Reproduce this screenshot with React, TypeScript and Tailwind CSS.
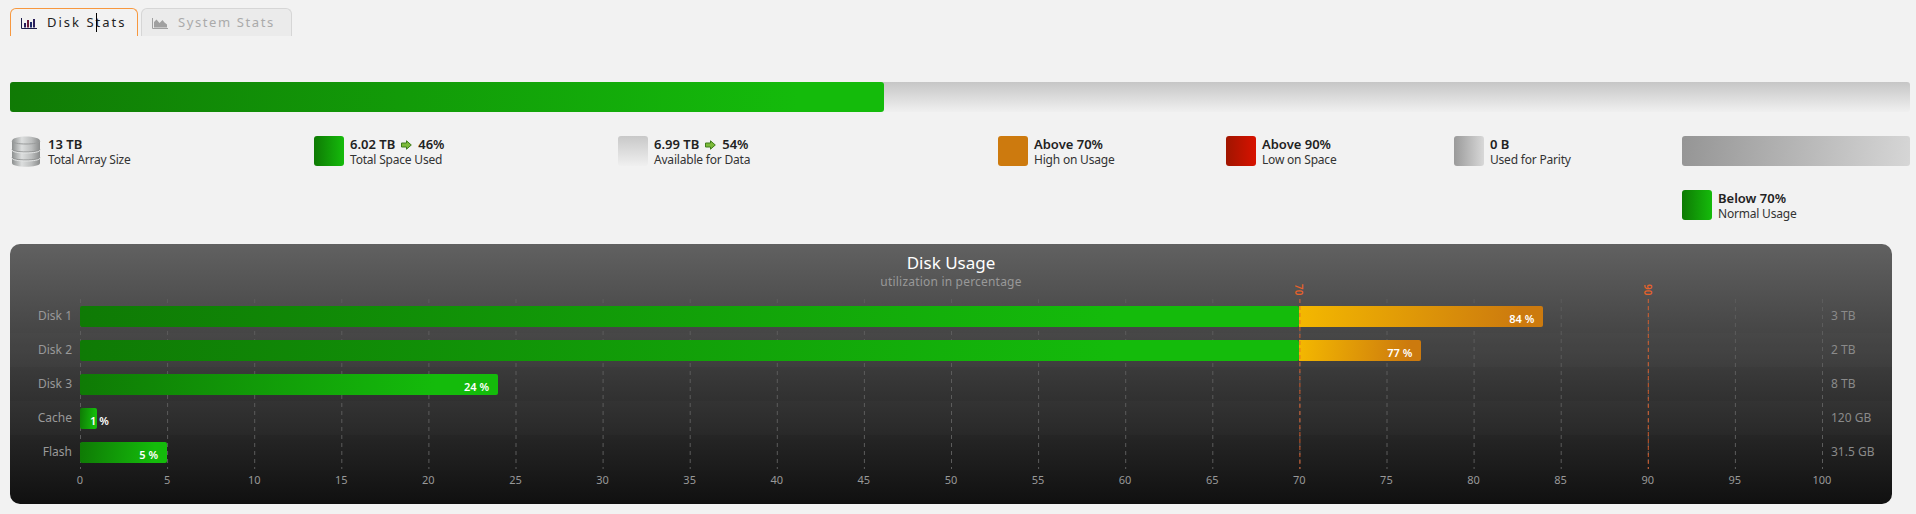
const font = "font-['Noto_Sans',sans-serif]";

const disks = [
  { name: 'Disk 1', used: 84, size: '3 TB' },
  { name: 'Disk 2', used: 77, size: '2 TB' },
  { name: 'Disk 3', used: 24, size: '8 TB' },
  { name: 'Cache', used: 1, size: '120 GB' },
  { name: 'Flash', used: 5, size: '31.5 GB' },
];

const ticks = Array.from({ length: 21 }, (_, i) => i * 5);
const UNIT = 17.42;

function BarIcon() {
  return (
    <svg width="16" height="11" viewBox="0 0 16 11" className="shrink-0">
      <path d="M.5 0v10.5H16" fill="none" stroke="#1d1d4a" />
      <rect x="3" y="5" width="2" height="4.5" fill="#2a1d5a" />
      <rect x="6" y="2" width="2" height="7.5" fill="#6a1a3a" />
      <rect x="9" y="4" width="2" height="5.5" fill="#1d2a6a" />
      <rect x="12" y="1" width="2" height="8.5" fill="#2a1d5a" />
    </svg>
  );
}

function AreaIcon() {
  return (
    <svg width="16" height="11" viewBox="0 0 16 11" className="shrink-0">
      <path d="M.5 0v10.5H16" fill="none" stroke="#a0a0a0" />
      <path d="M2 9.5V4l2.5-2.5L7.5 5l3-3 2 2.5 2.5 2v3z" fill="#a0a0a0" />
    </svg>
  );
}

function DatabaseIcon() {
  return (
    <svg width="30" height="32" viewBox="0 0 30 32" className="shrink-0">
      <defs>
        <linearGradient id="cyl" x1="0" y1="0" x2="1" y2="0">
          <stop offset="0" stopColor="#8d9090" />
          <stop offset="0.35" stopColor="#dcdede" />
          <stop offset="0.7" stopColor="#bcbebe" />
          <stop offset="1" stopColor="#8a8c8c" />
        </linearGradient>
      </defs>
      <path d="M1 5C1-1 29-1 29 5v22c0 5-28 5-28 0z" fill="url(#cyl)" />
      <path d="M1 5c0 4 28 4 28 0" fill="none" stroke="#9a9c9c" />
      <path d="M1 13c0 4 28 4 28 0M1 21c0 4 28 4 28 0" fill="none" stroke="#8f9191" />
      <path d="M1 14c0 4 28 4 28 0M1 22c0 4 28 4 28 0" fill="none" stroke="#e4e6e6" />
    </svg>
  );
}

function Arrow() {
  return (
    <svg width="11" height="10" viewBox="0 0 11 10" className="mx-[6px] inline-block shrink-0">
      <path d="M.5 3h5V.8L10.3 5 5.5 9.2V7h-5z" fill="#7dbb3a" stroke="#3f7d1c" />
    </svg>
  );
}

function Swatch({ className }: { className: string }) {
  return <div className={`h-[30px] w-[30px] shrink-0 rounded-[3px] ${className}`} />;
}

function LegendItem({ icon, title, sub, arrow, width }: { icon: React.ReactNode; title: string; sub: string; arrow?: string; width: string }) {
  return (
    <div className={`flex h-[30px] gap-[6px] ${width}`}>
      {icon}
      <div className="pt-[1px] whitespace-nowrap">
        <div className="flex h-[15px] items-center text-[13px] font-semibold text-[#222]">
          {title}
          {arrow && <Arrow />}
          {arrow}
        </div>
        <div className="text-[12px] leading-[16px] tracking-[-0.2px] text-[#333]">{sub}</div>
      </div>
    </div>
  );
}

function DiskBar({ used }: { used: number }) {
  const green = Math.min(used, 70);
  const over = used - green;
  const small = used < 3;
  const label = `${used} %`;
  return (
    <div className="relative z-10 flex h-[21px] items-center">
      <div
        className="flex h-full items-center justify-end rounded-[2px] bg-[linear-gradient(95deg,#0f7a05,#14bb0b_85%)]"
        style={{ width: green * UNIT }}
      >
        {over === 0 && !small && <span className="pt-[5px] pr-[9px] text-[11px] font-semibold text-white">{label}</span>}
      </div>
      {over > 0 && (
        <div
          className="flex h-full items-center justify-end rounded-r-[2px] bg-[linear-gradient(95deg,#f4b800,#cc7a0e_90%)]"
          style={{ width: over * UNIT }}
        >
          <span className="pt-[5px] pr-[9px] text-[11px] font-semibold text-white">{label}</span>
        </div>
      )}
      {small && <span className="absolute top-[5px] left-[10px] text-[11px] font-semibold whitespace-nowrap text-white">{label}</span>}
    </div>
  );
}

export default function App() {
  return (
    <div className={`h-[514px] overflow-hidden bg-[#f2f2f2] pt-2 pr-[6px] pl-[10px] ${font}`}>
      {/* Tabs */}
      <div className="flex h-[28px] gap-[3px] text-[13px]">
        <div className="relative flex w-[128px] items-center gap-[10px] rounded-t-[6px] border-x border-t border-[#f7983f] pt-[1px] pl-[10px] tracking-[2px] text-[#222]">
          <BarIcon />
          <span>Disk Stats</span>
          <span className="absolute top-[4px] left-[85px] h-[19px] w-px bg-black" />
        </div>
        <div className="flex w-[151px] items-center gap-[10px] rounded-t-[6px] border-x border-t border-[#d6d6d6] bg-[#ebebeb] pt-[1px] pl-[10px] tracking-[1.6px] text-[#aaa]">
          <AreaIcon />
          <span>System Stats</span>
        </div>
      </div>

      {/* Usage bar */}
      <div className="mt-[46px] h-[30px] rounded-[3px] bg-[linear-gradient(#c6c6c6,#f0f0f0)]">
        <div className="h-full w-[46%] rounded-[3px] bg-[linear-gradient(95deg,#107a05,#14bb0b_90%)]" />
      </div>

      {/* Legend */}
      <div className="mt-[24px] flex">
        <LegendItem width="w-[304px]" icon={<div className="mr-[1px] ml-[1px]"><DatabaseIcon /></div>} title="13 TB" sub="Total Array Size" />
        <LegendItem width="w-[304px]" icon={<Swatch className="bg-[linear-gradient(90deg,#0e7a04,#15bb0b)]" />} title="6.02 TB" arrow="46%" sub="Total Space Used" />
        <LegendItem width="w-[380px]" icon={<Swatch className="bg-[linear-gradient(#c8c8c8,#f0f0f0)]" />} title="6.99 TB" arrow="54%" sub="Available for Data" />
        <LegendItem width="w-[228px]" icon={<Swatch className="bg-[#cd7a0e]" />} title="Above 70%" sub="High on Usage" />
        <LegendItem width="w-[228px]" icon={<Swatch className="bg-[linear-gradient(90deg,#a01500,#d81200)]" />} title="Above 90%" sub="Low on Space" />
        <LegendItem width="w-[228px]" icon={<Swatch className="bg-[linear-gradient(90deg,#9a9a9a,#d8d8d8)]" />} title="0 B" sub="Used for Parity" />
        <div className="h-[30px] w-[228px] rounded-[3px] bg-[linear-gradient(95deg,#959595,#d6d6d6)]" />
      </div>
      <div className="mt-[24px] flex justify-end">
        <LegendItem width="w-[228px]" icon={<Swatch className="bg-[linear-gradient(90deg,#0e7a04,#15bb0b)]" />} title="Below 70%" sub="Normal Usage" />
      </div>

      {/* Chart */}
      <div className="relative mt-[24px] h-[260px] w-[1882px] rounded-[10px] bg-[linear-gradient(#616161,#101010)]">
        <div className="h-[55px] pt-[8px] text-center">
          <div className="text-[17px] leading-[22px] text-white">Disk Usage</div>
          <div className="text-[12px] leading-[16px] tracking-[0.2px] text-[#999]">utilization in percentage</div>
        </div>

        <svg width="1744" height="170" className="absolute top-[55px] left-[70px]">
          {ticks.map((t) => (
            <line key={t} x1={t * UNIT + 0.5} x2={t * UNIT + 0.5} y1="0" y2="170" stroke="#5c5c5c" strokeDasharray="4 4" />
          ))}
        </svg>

        {disks.map((d, i) => (
          <div key={d.name} className={`flex h-[34px] items-center text-[12px] ${i % 2 === 1 ? 'bg-white/[0.015]' : ''}`}>
            <div className="w-[70px] pr-[8px] text-right text-[#999]">{d.name}</div>
            <div className="h-[34px] w-[1742px] pt-[7px]">
              <DiskBar used={d.used} />
            </div>
            <div className="pl-[9px] whitespace-nowrap text-[#8a8a8a]">{d.size}</div>
          </div>
        ))}

        <svg width="1744" height="170" className="absolute top-[55px] left-[70px] z-20">
          {[70, 90].map((t) => (
            <line key={t} x1={t * UNIT + 0.5} x2={t * UNIT + 0.5} y1="0" y2="170" stroke="#e8622a" strokeOpacity="0.85" strokeDasharray="4 3" />
          ))}
        </svg>
        {[70, 90].map((t) => (
          <span
            key={t}
            className="absolute top-[40px] z-20 w-[12px] text-center text-[10px] leading-[12px] font-semibold text-[#e8622a] [writing-mode:vertical-rl]"
            style={{ left: 64 + t * UNIT }}
          >
            {t}
          </span>
        ))}

        <div className="ml-[70px] flex h-[22px] w-[1742px] items-center justify-between text-[11px] text-[#999]">
          {ticks.map((t) => (
            <span key={t} className="flex w-0 justify-center">{t}</span>
          ))}
        </div>
      </div>
    </div>
  );
}
